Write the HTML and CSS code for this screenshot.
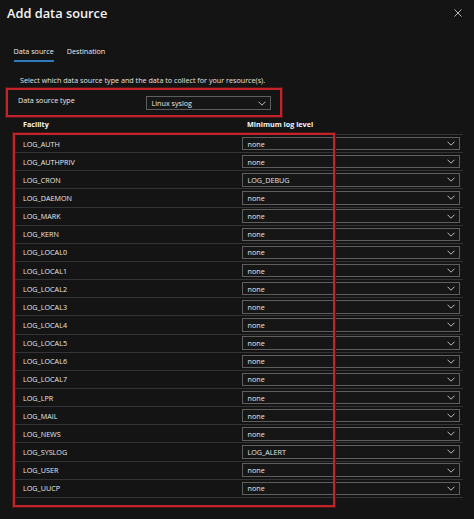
FILE: index.html
```html
<!DOCTYPE html>
<html lang="en">
<head>
<meta charset="utf-8">
<title>Add data source</title>
<link rel="stylesheet" href="styles.css">
</head>
<body>
<div class="panel">
  <header class="header">
    <h1 class="title">Add data source</h1>
    <svg class="close" viewBox="0 0 8 8" width="8" height="8"><path d="M0.5 0.5 L7.5 7.5 M7.5 0.5 L0.5 7.5" stroke="#c8c8c8" stroke-width="0.9" fill="none"/></svg>
  </header>
  <nav class="tabs">
    <span class="tab tab-active">Data source</span>
    <span class="tab">Destination</span>
  </nav>
  <p class="desc">Select which data source type and the data to collect for your resource(s).</p>
  <div class="type-box">
    <span class="type-label">Data source type</span>
    <div class="select select-type"><span>Linux syslog</span><svg class="chev" viewBox="0 0 8 5" width="8" height="5"><path d="M0.5 0.7 L4 4.2 L7.5 0.7" stroke="#cfcfcf" stroke-width="0.9" fill="none"/></svg></div>
  </div>
  <div class="thead">
    <span class="th th-fac">Facility</span>
    <span class="th th-lvl">Minimum log level</span>
  </div>
  <div class="table-wrap">
    <div class="rows" id="rows"></div>
    <div class="annot"></div>
  </div>
</div>
<script>
const data = [
  ["LOG_AUTH","none"],["LOG_AUTHPRIV","none"],["LOG_CRON","LOG_DEBUG"],["LOG_DAEMON","none"],
  ["LOG_MARK","none"],["LOG_KERN","none"],["LOG_LOCAL0","none"],["LOG_LOCAL1","none"],
  ["LOG_LOCAL2","none"],["LOG_LOCAL3","none"],["LOG_LOCAL4","none"],["LOG_LOCAL5","none"],
  ["LOG_LOCAL6","none"],["LOG_LOCAL7","none"],["LOG_LPR","none"],["LOG_MAIL","none"],
  ["LOG_NEWS","none"],["LOG_SYSLOG","LOG_ALERT"],["LOG_USER","none"],["LOG_UUCP","none"]
];
const rows = document.getElementById('rows');
rows.innerHTML = data.map(([f, l]) =>
  '<div class="row"><span class="fac">' + f + '</span><div class="select"><span>' + l +
  '</span><svg class="chev" viewBox="0 0 8 5" width="8" height="5"><path d="M0.5 0.7 L4 4.2 L7.5 0.7" stroke="#cfcfcf" stroke-width="0.9" fill="none"/></svg></div></div>'
).join('');
</script>
</body>
</html>
```
FILE: styles.css
```css
* { box-sizing: border-box; }
html, body { margin: 0; padding: 0; }
body {
  background: #141414;
  color: #e8e8e8;
  font-family: "Open Sans", "Noto Sans", sans-serif;
  font-size: 7.2px;
  width: 474px;
  height: 519px;
  overflow: hidden;
}
.panel { position: relative; }
.header {
  height: 26px;
  display: flex;
  align-items: center;
  justify-content: space-between;
  padding: 0 12px 0 7px;
}
.title {
  margin: 0;
  font-size: 12.8px;
  font-weight: 600;
  color: #f4f4f4;
  line-height: 24px;
}
.close { display: block; }
.tabs {
  margin-top: 16px;
  padding-left: 13.5px;
  display: flex;
  gap: 13px;
}
.tab {
  line-height: 17px;
  padding-top: 1px;
  border-bottom: 2px solid transparent;
  color: #ececec;
}
.tab-active { border-bottom-color: #2f7bbf; }
.desc {
  margin: 12px 0 0 20px;
  line-height: 12px;
  color: #e2e2e2;
}
.type-box {
  margin: 2px 0 0 6px;
  width: 276px;
  height: 29px;
  border: 2px solid #c3242b;
  box-shadow: 0 0 0 1px #4a1617;
  display: grid;
  grid-template-columns: 138px 125px;
  align-items: start;
  padding-top: 4px;
}
.type-label {
  padding-left: 10px;
  line-height: 12px;
  color: #e8e8e8;
}
.select {
  height: 13.4px;
  border: 1px solid #5e5e5e;
  background: #161616;
  display: flex;
  align-items: center;
  justify-content: space-between;
  padding: 0 4px 0 4.5px;
  color: #e6e6e6;
}
.select-type { margin-top: 2px; height: 14.3px; padding-right: 4px; }
.chev { display: block; }
.thead {
  height: 17px;
  display: grid;
  grid-template-columns: 224px 1fr;
  padding-left: 23px;
  line-height: 14px;
}
.th { font-weight: 700; color: #f6f6f6; }
.table-wrap {
  position: relative;
  margin-left: 14px;
  width: 449px;
}
.rows { border-top: 1px solid #343434; }
.row {
  height: 18.15px;
  border-bottom: 1px solid #343434;
  display: grid;
  grid-template-columns: 228px 218px;
  align-items: center;
}
.fac { padding-left: 9px; color: #e8e8e8; }
.annot {
  position: absolute;
  left: -1px;
  top: -1px;
  width: 322px;
  height: 374px;
  border: 2px solid #c3242b;
  box-shadow: 0 0 0 1px #4a1617;
  pointer-events: none;
}
```
